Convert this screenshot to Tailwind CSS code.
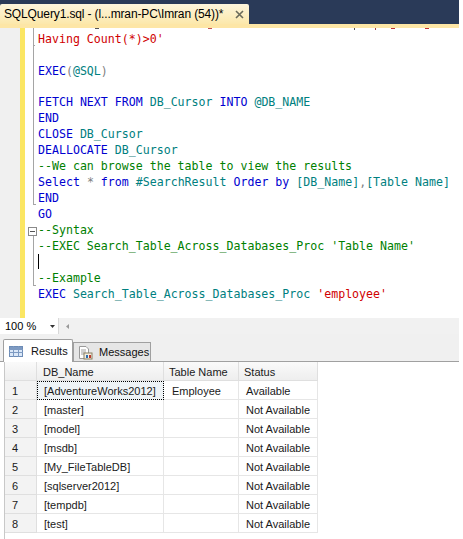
<!doctype html>
<html><head><script src="https://cdn.jsdelivr.net/npm/@tailwindcss/browser@4"></script></head>
<body class="bg-white">
<div class="w-[459px] h-[539px] flex flex-col overflow-hidden bg-white">
  <div class="h-[24px] bg-[#2a3a58] flex items-end shrink-0">
    <div class="h-[20px] w-[249px] bg-gradient-to-b from-[#fdf5dc] to-[#fce8ab] rounded-t-[2px] flex items-center justify-between pl-[4px] pr-[5px] font-['Liberation_Sans'] text-[12px] tracking-[-0.13px] text-black whitespace-nowrap">
      <span>SQLQuery1.sql - (l...mran-PC\Imran (54))*</span>
      <svg width="9" height="9" viewBox="0 0 9 9"><path d="M1 1L8 8M8 1L1 8" stroke="#6a6a5a" stroke-width="1.6"/></svg>
    </div>
  </div>
  <div class="h-[4px] bg-[#fde6a6] shrink-0"></div>
  <div class="h-[286px] flex shrink-0">
    <div class="w-[20px] bg-[#f0f0f0] shrink-0"></div>
    <div class="w-[5px] bg-[#fbe663] shrink-0"></div>
    <div class="w-[8px] shrink-0"></div>
    <div class="relative flex-1 pl-[5px] pt-[3px] font-['DejaVu_Sans_Mono'] text-[11.6px] leading-[16px] whitespace-nowrap">
      <div class="absolute left-0 top-0 h-[18px] w-[2px] border-l border-b border-[#a5a5a5]"></div>
      <div class="absolute left-0 top-[18px] h-[159px] w-[3px] border-l border-b border-[#a5a5a5]"></div>
      <div class="absolute left-[-5px] top-[199px] w-[9px] h-[9px] border border-[#8a8a8a] bg-white flex items-center justify-center"><div class="w-[5px] h-px bg-[#555]"></div></div>
      <div class="absolute left-0 top-[208px] h-[50px] w-[3px] border-l border-b border-[#a5a5a5]"></div>
      <div class="absolute top-0 left-[62px] w-[4px] h-px bg-[#555]"></div>
      <div class="absolute top-0 left-[175px] w-[4px] h-px bg-[#c05050]"></div>
      <div class="absolute top-0 left-[321px] w-px h-[2px] bg-[#555]"></div>
      <div class="absolute top-0 left-[342px] w-px h-[2px] bg-[#a04040]"></div>
      <div class="absolute top-0 left-[358px] w-[4px] h-px bg-[#c03030]"></div>
      <div class="absolute top-0 left-[392px] w-[4px] h-px bg-[#c03030]"></div>
      <div class="h-[16px] text-[#d00000]">Having Count(*)&gt;0'</div>
      <div class="h-[16px]"></div>
      <div class="h-[16px]"><span class="text-[#0000d0]">EXEC</span><span class="text-[#808080]">(</span><span class="text-[#008080]">@SQL</span><span class="text-[#808080]">)</span></div>
      <div class="h-[15px]"></div>
      <div class="h-[16px]"><span class="text-[#0000d0]">FETCH NEXT FROM</span> <span class="text-[#008080]">DB_Cursor</span> <span class="text-[#0000d0]">INTO</span> <span class="text-[#008080]">@DB_NAME</span></div>
      <div class="h-[16px] text-[#0000d0]">END</div>
      <div class="h-[16px]"><span class="text-[#0000d0]">CLOSE</span> <span class="text-[#008080]">DB_Cursor</span></div>
      <div class="h-[16px]"><span class="text-[#0000d0]">DEALLOCATE</span> <span class="text-[#008080]">DB_Cursor</span></div>
      <div class="h-[16px] text-[#008000]">--We can browse the table to view the results</div>
      <div class="h-[16px]"><span class="text-[#0000d0]">Select</span> <span class="text-[#808080]">*</span> <span class="text-[#0000d0]">from</span> <span class="text-[#008080]">#SearchResult</span> <span class="text-[#0000d0]">Order by</span> <span class="text-[#008080]">[DB_Name]</span><span class="text-[#808080]">,</span><span class="text-[#008080]">[Table Name]</span></div>
      <div class="h-[16px] text-[#0000d0]">END</div>
      <div class="h-[16px] text-[#0000d0]">GO</div>
      <div class="h-[16px] text-[#008000]">--Syntax</div>
      <div class="h-[16px] text-[#008000]">--EXEC Search_Table_Across_Databases_Proc 'Table Name'</div>
      <div class="h-[16px]"><span class="inline-block w-px h-[15px] bg-black align-top"></span></div>
      <div class="h-[16px] text-[#008000]">--Example</div>
      <div class="h-[16px]"><span class="text-[#0000d0]">EXEC</span> <span class="text-[#008080]">Search_Table_Across_Databases_Proc</span> <span class="text-[#d00000]">'employee'</span></div>
    </div>
  </div>
  <div class="h-[4px] bg-white shrink-0 flex"><div class="w-[20px] bg-[#f0f0f0]"></div><div class="w-[5px] bg-[#fbe663]"></div></div>
  <div class="h-[16px] bg-[#f1f1f1] flex items-center shrink-0 font-['Liberation_Sans'] text-[11px] text-black">
    <div class="w-[59px] h-full bg-white border-r border-[#d9d9d9] flex items-center justify-between pl-[5px] pr-[3px]"><span>100 %</span><svg width="5" height="3" viewBox="0 0 5 3"><path d="M0 0H5L2.5 3Z" fill="#333"/></svg></div>
    <svg class="ml-[7px]" width="3" height="5" viewBox="0 0 3 5"><path d="M3 0V5L0 2.5Z" fill="#999"/></svg>
  </div>
  <div class="h-[28px] bg-[#f0f0f0] flex items-end shrink-0 border-b border-[#a0a0a0] pl-[3px] font-['Liberation_Sans'] text-[11px] text-[#111]">
    <div class="h-[23px] w-[70px] bg-white border border-b-0 border-[#a0a0a0] rounded-t-[2px] flex items-center gap-[8px] pl-[5px] -mb-px">
      <svg width="14" height="11" viewBox="0 0 14 11"><rect x="0.5" y="0.5" width="13" height="10" fill="#dbe8f8" stroke="#6d8cb6"/><path d="M0 3.5H14M0 6.5H14M4.5 0V11M9.5 0V11" stroke="#7d9ac2"/><rect x="1" y="1" width="12" height="2" fill="#7d9ac2"/></svg>
      <span>Results</span>
    </div>
    <div class="h-[19px] w-[78px] bg-[#e6e6e6] border border-b-0 border-[#a0a0a0] flex items-center gap-[6px] pl-[4px]">
      <svg width="15" height="15" viewBox="0 0 15 15"><path d="M1.5 1.5H8L10.5 4V13.5H1.5Z" fill="#fff" stroke="#9a9a9a"/><path d="M3 5H8M3 7H8M3 9H6" stroke="#a0a0a0"/><rect x="6" y="8" width="8" height="6" fill="#f3efe0" stroke="#8a7f60"/><rect x="8" y="10" width="2" height="3" fill="#2b6cb0"/><rect x="11" y="10" width="2" height="3" fill="#c0392b"/></svg>
      <span>Messages</span>
    </div>
  </div>
  <div class="flex-1 pl-[4px] bg-white">
    <div class="font-['Liberation_Sans'] text-[11px] text-[#1a1a1a] border-l border-[#c8c8c8] w-[315px] h-full">
      <div class="flex h-[19px]">
        <div class="w-[32px] bg-gradient-to-b from-[#fafafa] to-[#eeeeee] border-r border-b border-[#dfdfdf]"></div>
        <div class="w-[127px] bg-gradient-to-b from-[#fafafa] to-[#eeeeee] border-r border-b border-[#dfdfdf] pl-[6px] leading-[20px]">DB_Name</div>
        <div class="w-[75px] bg-gradient-to-b from-[#fafafa] to-[#eeeeee] border-r border-b border-[#dfdfdf] pl-[5px] leading-[20px]">Table Name</div>
        <div class="w-[79px] bg-gradient-to-b from-[#fafafa] to-[#eeeeee] border-r border-b border-[#dfdfdf] pl-[5px] leading-[20px]">Status</div>
      </div>
      <div class="flex h-[19px]"><div class="w-[32px] bg-[#f3f3f3] border-r border-b border-[#dfdfdf] pl-[7px] leading-[20px]">1</div><div class="w-[127px] bg-[#eef3f6] border border-dotted border-black pl-[6px] leading-[18px]">[AdventureWorks2012]</div><div class="w-[75px] border-r border-b border-[#e6e6e6] pl-[8px] leading-[20px]">Employee</div><div class="w-[79px] border-r border-b border-[#e6e6e6] pl-[7px] leading-[20px]">Available</div></div>
      <div class="flex h-[19px]"><div class="w-[32px] bg-[#f3f3f3] border-r border-b border-[#dfdfdf] pl-[7px] leading-[20px]">2</div><div class="w-[127px] border-r border-b border-[#e6e6e6] pl-[7px] leading-[20px]">[master]</div><div class="w-[75px] border-r border-b border-[#e6e6e6]"></div><div class="w-[79px] border-r border-b border-[#e6e6e6] pl-[7px] leading-[20px]">Not Available</div></div>
      <div class="flex h-[19px]"><div class="w-[32px] bg-[#f3f3f3] border-r border-b border-[#dfdfdf] pl-[7px] leading-[20px]">3</div><div class="w-[127px] border-r border-b border-[#e6e6e6] pl-[7px] leading-[20px]">[model]</div><div class="w-[75px] border-r border-b border-[#e6e6e6]"></div><div class="w-[79px] border-r border-b border-[#e6e6e6] pl-[7px] leading-[20px]">Not Available</div></div>
      <div class="flex h-[19px]"><div class="w-[32px] bg-[#f3f3f3] border-r border-b border-[#dfdfdf] pl-[7px] leading-[20px]">4</div><div class="w-[127px] border-r border-b border-[#e6e6e6] pl-[7px] leading-[20px]">[msdb]</div><div class="w-[75px] border-r border-b border-[#e6e6e6]"></div><div class="w-[79px] border-r border-b border-[#e6e6e6] pl-[7px] leading-[20px]">Not Available</div></div>
      <div class="flex h-[19px]"><div class="w-[32px] bg-[#f3f3f3] border-r border-b border-[#dfdfdf] pl-[7px] leading-[20px]">5</div><div class="w-[127px] border-r border-b border-[#e6e6e6] pl-[7px] leading-[20px]">[My_FileTableDB]</div><div class="w-[75px] border-r border-b border-[#e6e6e6]"></div><div class="w-[79px] border-r border-b border-[#e6e6e6] pl-[7px] leading-[20px]">Not Available</div></div>
      <div class="flex h-[19px]"><div class="w-[32px] bg-[#f3f3f3] border-r border-b border-[#dfdfdf] pl-[7px] leading-[20px]">6</div><div class="w-[127px] border-r border-b border-[#e6e6e6] pl-[7px] leading-[20px]">[sqlserver2012]</div><div class="w-[75px] border-r border-b border-[#e6e6e6]"></div><div class="w-[79px] border-r border-b border-[#e6e6e6] pl-[7px] leading-[20px]">Not Available</div></div>
      <div class="flex h-[19px]"><div class="w-[32px] bg-[#f3f3f3] border-r border-b border-[#dfdfdf] pl-[7px] leading-[20px]">7</div><div class="w-[127px] border-r border-b border-[#e6e6e6] pl-[7px] leading-[20px]">[tempdb]</div><div class="w-[75px] border-r border-b border-[#e6e6e6]"></div><div class="w-[79px] border-r border-b border-[#e6e6e6] pl-[7px] leading-[20px]">Not Available</div></div>
      <div class="flex h-[19px]"><div class="w-[32px] bg-[#f3f3f3] border-r border-b border-[#dfdfdf] pl-[7px] leading-[20px]">8</div><div class="w-[127px] border-r border-b border-[#e6e6e6] pl-[7px] leading-[20px]">[test]</div><div class="w-[75px] border-r border-b border-[#e6e6e6]"></div><div class="w-[79px] border-r border-b border-[#e6e6e6] pl-[7px] leading-[20px]">Not Available</div></div>
    </div>
  </div>
</div>
</body></html>
